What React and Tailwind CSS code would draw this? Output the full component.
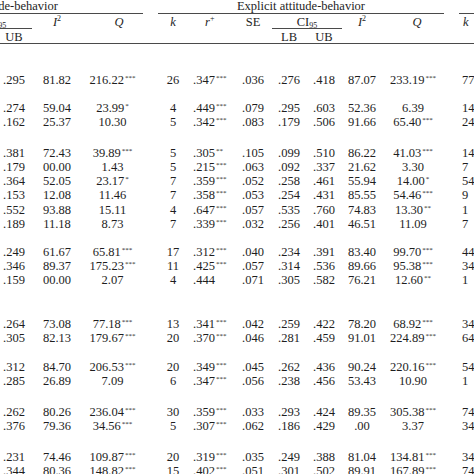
const rows = [
  { gap: 'mt-[28.9px]', ub1: '.295', i21: '81.82', q1: '216.22', q1s: '***', k2: '26', r2: '.347', r2s: '***', se: '.036', lb2: '.276', ub2: '.418', i22: '87.07', q2: '233.19', q2s: '***', k3: '77' },
  { gap: 'mt-[13.8px]', ub1: '.274', i21: '59.04', q1: '23.99', q1s: '*', k2: '4', r2: '.449', r2s: '***', se: '.079', lb2: '.295', ub2: '.603', i22: '52.36', q2: '6.39', q2s: '', k3: '14' },
  { gap: '', ub1: '.162', i21: '25.37', q1: '10.30', q1s: '', k2: '5', r2: '.342', r2s: '***', se: '.083', lb2: '.179', ub2: '.506', i22: '91.66', q2: '65.40', q2s: '***', k3: '24' },
  { gap: 'mt-[16.6px]', ub1: '.381', i21: '72.43', q1: '39.89', q1s: '***', k2: '5', r2: '.305', r2s: '**', se: '.105', lb2: '.099', ub2: '.510', i22: '86.22', q2: '41.03', q2s: '***', k3: '14' },
  { gap: '', ub1: '.179', i21: '00.00', q1: '1.43', q1s: '', k2: '5', r2: '.215', r2s: '***', se: '.063', lb2: '.092', ub2: '.337', i22: '21.62', q2: '3.30', q2s: '', k3: '7' },
  { gap: '', ub1: '.364', i21: '52.05', q1: '23.17', q1s: '*', k2: '7', r2: '.359', r2s: '***', se: '.052', lb2: '.258', ub2: '.461', i22: '55.94', q2: '14.00', q2s: '*', k3: '54' },
  { gap: '', ub1: '.153', i21: '12.08', q1: '11.46', q1s: '', k2: '7', r2: '.358', r2s: '***', se: '.053', lb2: '.254', ub2: '.431', i22: '85.55', q2: '54.46', q2s: '***', k3: '9' },
  { gap: '', ub1: '.552', i21: '93.88', q1: '15.11', q1s: '', k2: '4', r2: '.647', r2s: '***', se: '.057', lb2: '.535', ub2: '.760', i22: '74.83', q2: '13.30', q2s: '**', k3: '1' },
  { gap: '', ub1: '.189', i21: '11.18', q1: '8.73', q1s: '', k2: '7', r2: '.339', r2s: '***', se: '.032', lb2: '.256', ub2: '.401', i22: '46.51', q2: '11.09', q2s: '', k3: '7' },
  { gap: 'mt-[13.8px]', ub1: '.249', i21: '61.67', q1: '65.81', q1s: '***', k2: '17', r2: '.312', r2s: '***', se: '.040', lb2: '.234', ub2: '.391', i22: '83.40', q2: '99.70', q2s: '***', k3: '44' },
  { gap: '', ub1: '.346', i21: '89.37', q1: '175.23', q1s: '***', k2: '11', r2: '.425', r2s: '***', se: '.057', lb2: '.314', ub2: '.536', i22: '89.66', q2: '95.38', q2s: '***', k3: '34' },
  { gap: '', ub1: '.159', i21: '00.00', q1: '2.07', q1s: '', k2: '4', r2: '.444', r2s: '', se: '.071', lb2: '.305', ub2: '.582', i22: '76.21', q2: '12.60', q2s: '**', k3: '1' },
  { gap: 'mt-[29.4px]', ub1: '.264', i21: '73.08', q1: '77.18', q1s: '***', k2: '13', r2: '.341', r2s: '***', se: '.042', lb2: '.259', ub2: '.422', i22: '78.20', q2: '68.92', q2s: '***', k3: '34' },
  { gap: '', ub1: '.305', i21: '82.13', q1: '179.67', q1s: '***', k2: '20', r2: '.370', r2s: '***', se: '.046', lb2: '.281', ub2: '.459', i22: '91.01', q2: '224.89', q2s: '***', k3: '64' },
  { gap: 'mt-[14.6px]', ub1: '.312', i21: '84.70', q1: '206.53', q1s: '***', k2: '20', r2: '.349', r2s: '***', se: '.045', lb2: '.262', ub2: '.436', i22: '90.24', q2: '220.16', q2s: '***', k3: '54' },
  { gap: '', ub1: '.285', i21: '26.89', q1: '7.09', q1s: '', k2: '6', r2: '.347', r2s: '***', se: '.056', lb2: '.238', ub2: '.456', i22: '53.43', q2: '10.90', q2s: '', k3: '1' },
  { gap: 'mt-[16.6px]', ub1: '.262', i21: '80.26', q1: '236.04', q1s: '***', k2: '30', r2: '.359', r2s: '***', se: '.033', lb2: '.293', ub2: '.424', i22: '89.35', q2: '305.38', q2s: '***', k3: '74' },
  { gap: '', ub1: '.376', i21: '79.36', q1: '34.56', q1s: '***', k2: '5', r2: '.307', r2s: '***', se: '.062', lb2: '.186', ub2: '.429', i22: '.00', q2: '3.37', q2s: '', k3: '34' },
  { gap: 'mt-[16.6px]', ub1: '.231', i21: '74.46', q1: '109.87', q1s: '***', k2: '20', r2: '.319', r2s: '***', se: '.035', lb2: '.249', ub2: '.388', i22: '81.04', q2: '134.81', q2s: '***', k3: '34' },
  { gap: '', ub1: '.344', i21: '80.36', q1: '148.82', q1s: '***', k2: '15', r2: '.402', r2s: '***', se: '.051', lb2: '.301', ub2: '.502', i22: '89.91', q2: '167.89', q2s: '***', k3: '74' },
];

function Stars({ s }) {
  if (!s) return null;
  return <sup className="text-[7px] top-[-4px] ml-px">{s}</sup>;
}

export default function App() {
  return (
    <div className="w-[474px] h-[474px] overflow-hidden bg-white text-[#1e1e1e] font-['Liberation_Serif',serif] text-[12.5px]">
      <div className="ml-[-40px] w-[560px]">
        {/* group titles */}
        <div className="flex h-[14px] leading-[13px]">
          <div className="w-[183px] shrink-0 flex justify-end pr-[85px] border-b border-[#4a4a4a]">
            <span className="shrink-0 whitespace-nowrap">Implicit attitude-behavior</span>
          </div>
          <div className="w-[15px] shrink-0" />
          <div className="w-[286px] shrink-0 text-center whitespace-nowrap border-b border-[#4a4a4a]">
            Explicit attitude-behavior
          </div>
          <div className="w-[15px] shrink-0" />
          <div className="w-[60px] shrink-0 border-b border-[#4a4a4a]" />
        </div>

        {/* column heads */}
        <div className="flex leading-[12px]">
          <div className="w-[72px] shrink-0 pt-[2px] text-center border-b border-[#4a4a4a]">
            CI<sub className="text-[8px]">95</sub>
          </div>
          <div className="w-[50px] shrink-0 pt-[2px] text-center">
            <i>I</i><sup className="text-[8px] top-[-5px]">2</sup>
          </div>
          <div className="w-[61px] shrink-0 pt-[2px] pl-[13px] text-center"><i>Q</i></div>
          <div className="w-[15px] shrink-0" />
          <div className="w-[30px] shrink-0 pt-[2px] text-center"><i>k</i></div>
          <div className="w-[46px] shrink-0 pt-[2px] pl-[17px]">
            <i>r</i><sup className="text-[8px] top-[-5px]">+</sup>
          </div>
          <div className="w-[38px] shrink-0 pt-[2px] text-center">SE</div>
          <div className="w-[70px] shrink-0 pt-[2px] text-center border-b border-[#4a4a4a]">
            CI<sub className="text-[8px]">95</sub>
          </div>
          <div className="w-[40px] shrink-0 pt-[2px] text-center">
            <i>I</i><sup className="text-[8px] top-[-5px]">2</sup>
          </div>
          <div className="w-[62px] shrink-0 pt-[2px] pl-[8px] text-center"><i>Q</i></div>
          <div className="w-[15px] shrink-0" />
          <div className="w-[60px] shrink-0 pt-[2px] pl-[4px]"><i>k</i></div>
        </div>
        <div className="flex leading-[12px] h-[15px] pt-[2px] border-b border-[#4a4a4a]">
          <div className="w-[36px] shrink-0 text-center">LB</div>
          <div className="w-[36px] shrink-0 text-center">UB</div>
          <div className="w-[240px] shrink-0" />
          <div className="w-[34px] shrink-0 text-center">LB</div>
          <div className="w-[36px] shrink-0 text-center">UB</div>
        </div>

        {/* body */}
        {rows.map((r, i) => (
          <div key={i} className={`flex h-[14.2px] leading-[14.2px] whitespace-nowrap ${r.gap}`}>
            <div className="w-[36px] shrink-0" />
            <div className="w-[36px] shrink-0 text-center">{r.ub1}</div>
            <div className="w-[50px] shrink-0 text-center">{r.i21}</div>
            <div className="w-[61px] shrink-0 text-center">
              {r.q1}<Stars s={r.q1s} />
            </div>
            <div className="w-[15px] shrink-0" />
            <div className="w-[30px] shrink-0 text-center">{r.k2}</div>
            <div className="w-[46px] shrink-0 pl-[5px]">
              {r.r2}<Stars s={r.r2s} />
            </div>
            <div className="w-[38px] shrink-0 text-center">{r.se}</div>
            <div className="w-[34px] shrink-0 text-center">{r.lb2}</div>
            <div className="w-[36px] shrink-0 text-center">{r.ub2}</div>
            <div className="w-[40px] shrink-0 text-center">{r.i22}</div>
            <div className="w-[62px] shrink-0 text-center">
              {r.q2}<Stars s={r.q2s} />
            </div>
            <div className="w-[15px] shrink-0" />
            <div className="w-[60px] shrink-0 pl-[3px]">{r.k3}</div>
          </div>
        ))}
      </div>
    </div>
  );
}
